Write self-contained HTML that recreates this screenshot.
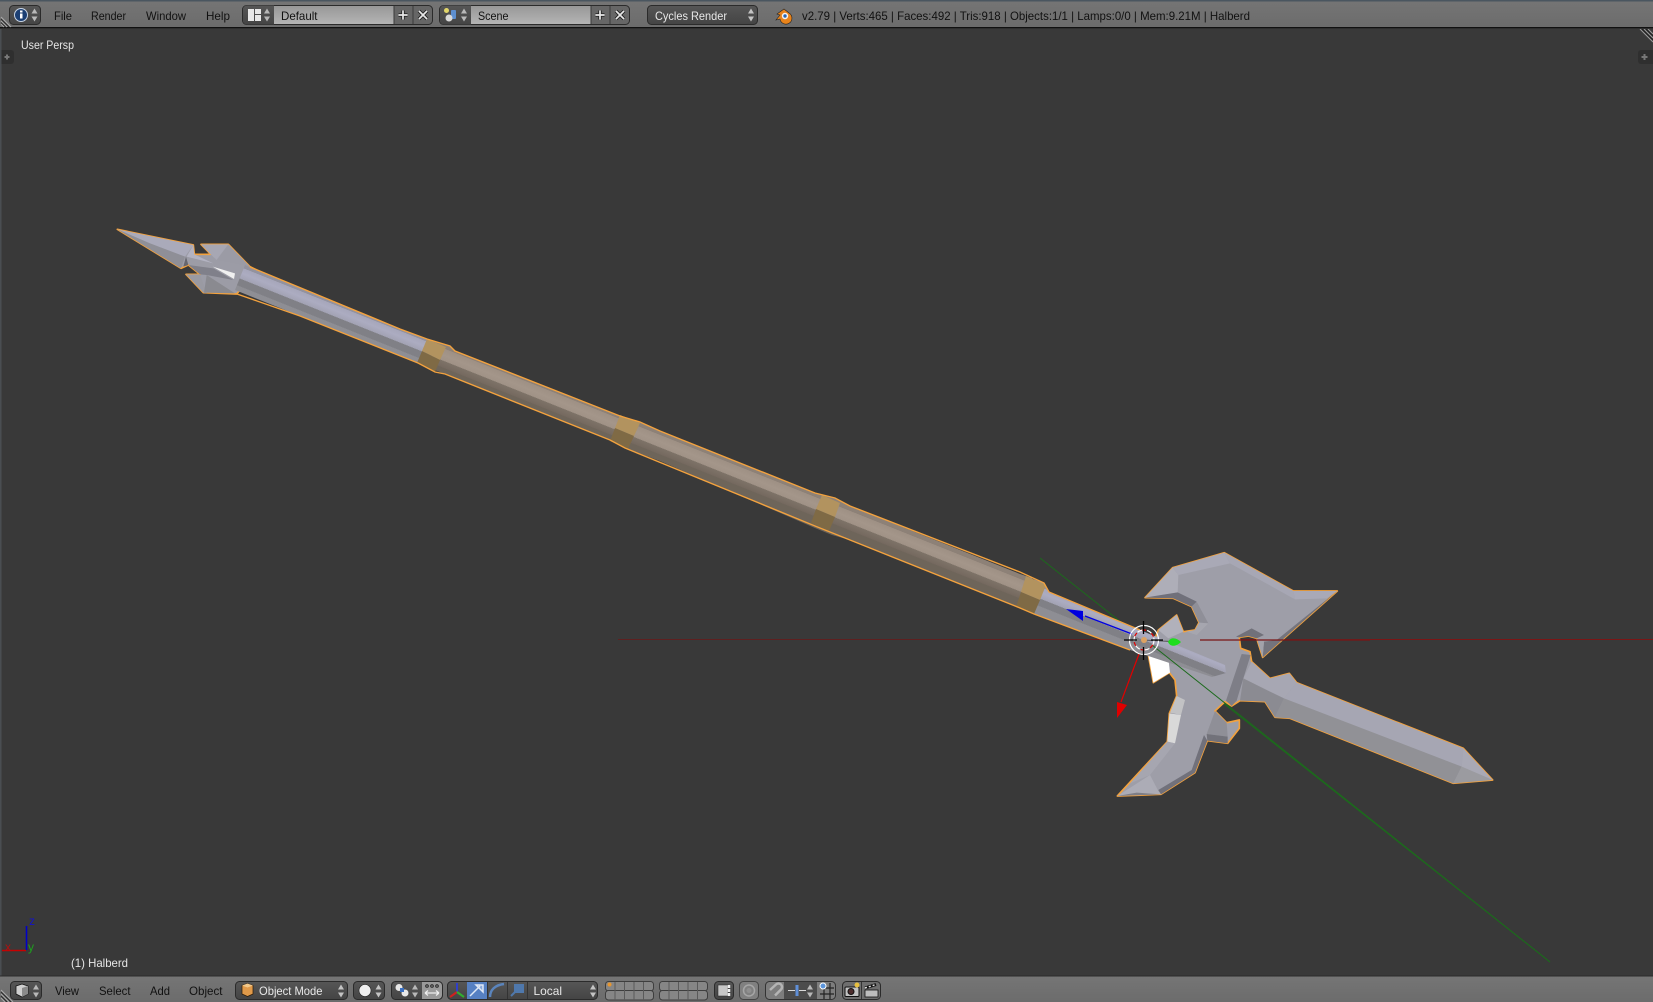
<!DOCTYPE html>
<html><head><meta charset="utf-8"><title>Blender</title>
<style>
html,body{margin:0;padding:0;background:#393939;overflow:hidden}
svg{display:block}
text{font-family:"Liberation Sans",sans-serif;font-size:12px}
</style></head><body>
<svg xmlns="http://www.w3.org/2000/svg" width="1653" height="1002" viewBox="0 0 1653 1002">
<defs>
<linearGradient id="gs" gradientUnits="userSpaceOnUse" x1="804.8" y1="490" x2="795.2" y2="514">
<stop offset="0" stop-color="#92929f"/><stop offset=".1" stop-color="#92929f"/><stop offset=".1" stop-color="#a6a6ba"/><stop offset=".3" stop-color="#acacc1"/><stop offset=".52" stop-color="#a2a2b3"/><stop offset=".52" stop-color="#808086"/><stop offset=".8" stop-color="#808086"/><stop offset=".8" stop-color="#8e8e94"/><stop offset="1" stop-color="#8e8e94"/>
</linearGradient>
<linearGradient id="gt" gradientUnits="userSpaceOnUse" x1="804.8" y1="490" x2="795.2" y2="514">
<stop offset="0" stop-color="#8d8177"/><stop offset=".1" stop-color="#8d8177"/><stop offset=".1" stop-color="#9e9084"/><stop offset=".35" stop-color="#a4968a"/><stop offset=".55" stop-color="#a09286"/><stop offset=".55" stop-color="#7e7368"/><stop offset=".8" stop-color="#75695f"/><stop offset=".8" stop-color="#6e655a"/><stop offset="1" stop-color="#6e655a"/>
</linearGradient>
<linearGradient id="field" x1="0" y1="0" x2="0" y2="1"><stop offset="0" stop-color="#989898"/><stop offset="1" stop-color="#b4b4b4"/></linearGradient>
<linearGradient id="dark" x1="0" y1="0" x2="0" y2="1"><stop offset="0" stop-color="#565656"/><stop offset="1" stop-color="#444"/></linearGradient>
<linearGradient id="bar" x1="0" y1="0" x2="0" y2="1"><stop offset="0" stop-color="#757575"/><stop offset="1" stop-color="#6c6c6c"/></linearGradient>
<symbol id="ud" viewBox="0 0 8 14" width="8" height="14"><path d="M4 0.5L7 5.5H1Z M4 13.5L1 8.5H7Z" fill="#b8b8b8"/></symbol>
<symbol id="udl" viewBox="0 0 8 14" width="8" height="14"><path d="M4 0.5L7 5.5H1Z M4 13.5L1 8.5H7Z" fill="#c4c4c4"/></symbol>
</defs>

<rect width="1653" height="1002" fill="#393939"/>

<!-- axis lines behind object -->
<line x1="618" y1="639.5" x2="1653" y2="639.5" stroke="#5e2020" stroke-width="1"/>
<line x1="1360" y1="639.5" x2="1653" y2="639.5" stroke="#7a1616" stroke-width="1"/>
<line x1="1040" y1="558" x2="1550" y2="962" stroke="#1c6a1c" stroke-width="1"/>

<!-- axe in 3x local coords -->
<g transform="translate(1080,530) scale(.33333)">
<path d="M433 68L640 183L772 183L548 382L530 325L505 318L478 322L482 355L510 365L515 395L570 445L628 430L650 458L1150 655L1238 750L1120 760L630 565L585 562L555 515L480 512L455 528L435 515L405 543L440 578L478 570L478 595L443 640L382 632L345 728L243 793L112 798L262 635L268 550L290 498L285 450L268 428L220 458L205 375L235 300L290 255L310 305L345 300L357 278L335 230L280 205L195 203L278 113Z" fill="#9e9ea8" stroke="#f3a23e" stroke-width="5" stroke-linejoin="round"/>
<path d="M278 113L433 68L450 100L295 135Z" fill="#a9a9b6"/>
<path d="M433 68L640 183L645 208L450 100Z" fill="#a7a7b4"/>
<path d="M640 183L772 183L740 205L645 208Z" fill="#a9a9b7"/>
<path d="M772 183L590 330L552 335L548 382Z" fill="#74747d"/>
<path d="M530 325L552 335L548 382Z" fill="#a2a2aa"/>
<path d="M195 203L278 113L295 135L293 187Z" fill="#aeaeb8"/>
<path d="M195 203L293 187L350 215L335 230L280 205Z" fill="#70707a"/>
<path d="M335 230L350 215L385 280L357 278Z" fill="#8f8f98"/>
<path d="M318 305L345 300L357 278L385 280L350 315Z" fill="#a6a6af"/>
<path d="M468 320L515 295L552 315L530 325L505 318L478 322Z" fill="#71717a"/>
<path d="M235 300L290 255L310 305L265 325Z" fill="#b1b1bb"/>
<path d="M205 375L265 385L270 428L220 458Z" fill="#fff"/>
<path d="M650 458L1150 655L1145 710L612 505Z" fill="#a6a6b3"/>
<path d="M612 505L1145 710L1120 760L630 565L585 562Z" fill="#919196"/>
<path d="M1150 655L1238 750L1145 710Z" fill="#a9a9b5"/>
<path d="M1145 710L1238 750L1120 760Z" fill="#9b9ba0"/>
<path d="M515 395L570 445L628 430L650 458L612 505L560 480L490 445Z" fill="#a7a7b3"/>
<path d="M490 445L560 480L612 505L585 562L555 515L480 512Z" fill="#8b8b92"/>
<path d="M485 372L512 375L490 445L470 512L455 528L438 512Z" fill="#7e7e87"/>
<path d="M290 498L315 510L303 555L270 548Z" fill="#c2c2c4"/>
<path d="M268 550L303 555L285 640L262 635Z" fill="#d9d9d9"/>
<path d="M382 632L345 728L243 793L235 780L335 720L372 615Z" fill="#71717b"/>
<path d="M405 543L440 578L443 620L380 612Z" fill="#8f8f97"/>
<path d="M380 612L443 620L443 640L382 632Z" fill="#72727a"/>
<path d="M112 798L210 735L235 783L243 793Z" fill="#acacb6"/>
<path d="M112 798L243 793L170 788Z" fill="#7e7e86"/>
<path d="M262 635L285 640L210 735L150 760Z" fill="#a6a6b0"/>
</g>

<!-- spear head -->
<g transform="translate(100,210) scale(.33333)">
<path d="M52 58L280 105L283 133L332 133L303 103L385 103L450 170L470 180L410 252L310 248L258 193L300 193L265 165L243 175Z" fill="#9c9ca6" stroke="#f3a23e" stroke-width="5" stroke-linejoin="round"/>
<path d="M52 58L280 105L255 140L150 100Z" fill="#aaaaba"/>
<path d="M52 58L150 100L255 140L243 175Z" fill="#8f8f97"/>
<path d="M280 105L283 133L340 160L260 140Z" fill="#b3b3c2"/>
<path d="M303 103L385 103L350 150L332 133Z" fill="#a7a7b3"/>
<path d="M385 103L450 170L350 150Z" fill="#9b9ba5"/>
<path d="M258 140L265 165L250 170Z" fill="#66666e"/>
<path d="M265 165L340 175L400 210L320 195L300 193Z" fill="#80808a"/>
<path d="M258 193L300 193L320 250L310 248Z" fill="#9a9aa2"/>
<path d="M320 195L405 250L312 248Z" fill="#8a8a90"/>
<path d="M338 170L405 190L402 207Z" fill="#f0f0f0"/>
</g>

<!-- shaft -->
<path d="M245 265L300 288L400 329L432 341L432 369L418 363L300 316L235 290Z" fill="url(#gs)"/>
<path d="M432 341L450 346L455 351L620 416L640 422L660 431L815 493L835 498L850 506L1020 574L1032 578L1032 613L1020 608L850 540L832 535L815 528L660 461L625 448L610 440L445 374L432 369Z" fill="url(#gt)"/>
<path d="M1030 578L1044 583L1049 592L1140 630L1225 665L1226 673L1212 677L1130 650L1034 614L1024 610Z" fill="url(#gs)"/>
<!-- rings -->
<path d="M422 351L427 339L446 347L440 360Z" fill="#b2935f"/>
<path d="M422 351L440 360L435 372L417 363Z" fill="#7f6a45"/>
<path d="M620 415L640 423L634 436L615 428Z" fill="#b2935f"/>
<path d="M615 428L634 436L628 449L610 441Z" fill="#7f6a45"/>
<path d="M822 495L840 503L835 517L816 509Z" fill="#b2935f"/>
<path d="M816 509L835 517L829 531L811 523Z" fill="#7f6a45"/>
<path d="M1026 576L1046 585L1040 600L1021 592Z" fill="#b2935f"/>
<path d="M1021 592L1040 600L1034 614L1016 607Z" fill="#7f6a45"/>
<!-- shaft outline -->
<path d="M250 267L400 329L427 339L450 346L455 351L620 416L640 422L660 431L815 493L835 498L850 506L1020 572L1044 583L1049 592L1140 630" fill="none" stroke="#f3a23e" stroke-width="1.400"/>
<path d="M237 294L300 316L418 363L435 372L445 374L610 440L625 448L815 526L830 532L850 540L1020 608L1034 614L1130 650" fill="none" stroke="#f3a23e" stroke-width="1.400"/>

<!-- green line over axe -->
<line x1="1152" y1="645" x2="1550" y2="962" stroke="#1c6a1c" stroke-width="1"/>
<line x1="1200" y1="640" x2="1370" y2="640" stroke="#7a1616" stroke-width="1.200"/>

<!-- gizmos -->
<line x1="1143" y1="640" x2="1180" y2="642" stroke="#555" stroke-width="1"/>
<path d="M1168 642C1170 637 1176 637 1181 642C1176 647 1170 647 1168 642Z" fill="#1fdd1f"/>
<line x1="1132" y1="634" x2="1085" y2="616" stroke="#0000e0" stroke-width="1.400"/>
<path d="M1066 609L1083 611L1083 621Z" fill="#0000e0"/>
<line x1="1139" y1="654" x2="1121" y2="702" stroke="#e00000" stroke-width="1.200"/>
<path d="M1117 718L1117 702L1127 705Z" fill="#e00000"/>
<circle cx="1144" cy="640" r="14.500" fill="none" stroke="#fff" stroke-width="1.200"/>
<circle cx="1144" cy="640" r="10" fill="none" stroke="#fff" stroke-width="1.200" stroke-dasharray="6 4"/>
<circle cx="1144" cy="640" r="10" fill="none" stroke="#e00000" stroke-width="1.200" stroke-dasharray="4 6" stroke-dashoffset="5"/>
<path d="M1124 640H1137M1151 640H1163M1143.500 621V634M1143.500 647V660" stroke="#000" stroke-width="1.300" fill="none"/>
<circle cx="1144" cy="640" r="3" fill="#dda262"/>

<!-- view text -->
<text x="21" y="49" fill="#e6e6e6" font-size="12" textLength="53" lengthAdjust="spacingAndGlyphs">User Persp</text>
<text x="71" y="967" fill="#e6e6e6" font-size="12" textLength="57" lengthAdjust="spacingAndGlyphs">(1) Halberd</text>

<!-- orientation axes -->
<line x1="2" y1="950.500" x2="26" y2="950.500" stroke="#c80000" stroke-width="1.600"/>
<line x1="26.500" y1="926" x2="26.500" y2="950" stroke="#0000c8" stroke-width="1.600"/>
<text x="5" y="951" fill="#b01010" font-size="11">x</text>
<text x="29" y="925" fill="#1414c8" font-size="11">z</text>
<text x="28" y="951" fill="#1ea01e" font-size="11">y</text>

<!-- area plus tabs -->
<rect x="-4" y="50" width="18" height="14" rx="3" fill="#2f2f2f"/>
<path d="M4.500 57H9.500M7 54.500V59.500" stroke="#777" stroke-width="2"/>
<rect x="1638" y="50" width="20" height="14" rx="3" fill="#2f2f2f"/>
<path d="M1641.500 57H1647.500M1644.500 54V60" stroke="#777" stroke-width="2"/>
<path d="M1640 29L1653 42M1644 29L1653 38M1648 29L1653 34" stroke="#9a9a9a" stroke-width="1" fill="none"/>
<path d="M1642 29L1653 40M1646 29L1653 36" stroke="#1e1e1e" stroke-width="1" fill="none"/>

<rect x="0" y="28" width="1.500" height="948" fill="#4a4e52"/>

<!-- TOP BAR -->
<rect x="0" y="0" width="1653" height="27" fill="url(#bar)"/>
<rect x="0" y="0" width="1653" height="1.500" fill="#4a5660"/>
<rect x="0" y="27" width="1653" height="1" fill="#111"/>
<rect x="0" y="28" width="1653" height="1" fill="#2e2e2e"/>
<path d="M1 17L11 27M1 21L7 27M1 24L4 27" stroke="#aaa" stroke-width="1" fill="none"/>
<path d="M1 19L9 27M1 22.500L5.500 27" stroke="#2a2a2a" stroke-width="1" fill="none"/>

<rect x="9.500" y="5.500" width="31" height="19" rx="4" fill="url(#dark)" stroke="#2b2b2b"/>
<circle cx="21" cy="15" r="6.500" fill="#1c3f73" stroke="#c8d4e4" stroke-width="1"/>
<rect x="20" y="13.500" width="2.500" height="5" fill="#fff"/><rect x="20" y="10.500" width="2.500" height="2" fill="#fff"/>
<use href="#ud" x="30.500" y="8"/>
<text x="54" y="20" fill="#111" font-size="12" textLength="18" lengthAdjust="spacingAndGlyphs">File</text>
<text x="91" y="20" fill="#111" font-size="12" textLength="35" lengthAdjust="spacingAndGlyphs">Render</text>
<text x="146" y="20" fill="#111" font-size="12" textLength="40" lengthAdjust="spacingAndGlyphs">Window</text>
<text x="206" y="20" fill="#111" font-size="12" textLength="24" lengthAdjust="spacingAndGlyphs">Help</text>

<!-- layout -->
<rect x="242.500" y="5.500" width="190" height="19" rx="4" fill="#666" stroke="#2b2b2b"/>
<path d="M243 9.500a4 4 0 0 1 4-4H274V24.500H247a4 4 0 0 1-4-4Z" fill="url(#dark)"/>
<rect x="274" y="6" width="119.500" height="18" fill="url(#field)"/>
<rect x="393.500" y="6" width="1" height="18" fill="#3a3a3a"/>
<rect x="412.500" y="6" width="1" height="18" fill="#3a3a3a"/>
<rect x="248" y="9" width="6" height="12" fill="#e8e8e8"/><rect x="255" y="9" width="6" height="5" fill="#e8e8e8"/><rect x="255" y="15" width="6" height="6" fill="#e8e8e8"/>
<use href="#ud" x="263" y="8"/>
<text x="281" y="20" fill="#111" font-size="12" textLength="36.500" lengthAdjust="spacingAndGlyphs">Default</text>
<path d="M403 10.500V19.500M398.500 15H407.500" stroke="#222" stroke-width="3.500"/><path d="M403 10.500V19.500M398.500 15H407.500" stroke="#e8e8e8" stroke-width="1.700"/>
<path d="M419 11L427 19M427 11L419 19" stroke="#222" stroke-width="3.500"/><path d="M419 11L427 19M427 11L419 19" stroke="#e8e8e8" stroke-width="1.700"/>

<!-- scene -->
<rect x="439.500" y="5.500" width="190" height="19" rx="4" fill="#666" stroke="#2b2b2b"/>
<path d="M440 9.500a4 4 0 0 1 4-4H471V24.500H444a4 4 0 0 1-4-4Z" fill="url(#dark)"/>
<rect x="471" y="6" width="119.500" height="18" fill="url(#field)"/>
<rect x="590.500" y="6" width="1" height="18" fill="#3a3a3a"/>
<rect x="609.500" y="6" width="1" height="18" fill="#3a3a3a"/>
<circle cx="446.500" cy="10.500" r="2.500" fill="#e2d66a"/><rect x="451" y="10" width="5" height="9" rx="1" fill="#5d8fd0"/><circle cx="449" cy="18" r="3.500" fill="#d8d8d8"/>
<use href="#ud" x="460" y="8"/>
<text x="478" y="20" fill="#111" font-size="12" textLength="30.500" lengthAdjust="spacingAndGlyphs">Scene</text>
<path d="M600 10.500V19.500M595.500 15H604.500" stroke="#222" stroke-width="3.500"/><path d="M600 10.500V19.500M595.500 15H604.500" stroke="#e8e8e8" stroke-width="1.700"/>
<path d="M616 11L624 19M624 11L616 19" stroke="#222" stroke-width="3.500"/><path d="M616 11L624 19M624 11L616 19" stroke="#e8e8e8" stroke-width="1.700"/>

<!-- engine -->
<rect x="647.500" y="5.500" width="110" height="19" rx="4" fill="url(#dark)" stroke="#2b2b2b"/>
<text x="655" y="20" fill="#e8e8e8" font-size="12" textLength="72" lengthAdjust="spacingAndGlyphs">Cycles Render</text>
<use href="#udl" x="747" y="8"/>

<!-- logo -->
<path d="M777 14L784 9L789 13A6 6 0 1 1 780 19L776 20L780 15Z" fill="#e8831a" stroke="#222" stroke-width=".6"/>
<circle cx="785" cy="16" r="3.200" fill="#f4f4f4"/><circle cx="785" cy="16" r="1.700" fill="#2c66b0"/>
<text x="802" y="20" fill="#111" font-size="12" textLength="448" lengthAdjust="spacingAndGlyphs">v2.79 | Verts:465 | Faces:492 | Tris:918 | Objects:1/1 | Lamps:0/0 | Mem:9.21M | Halberd</text>

<!-- BOTTOM BAR -->
<rect x="0" y="975.500" width="1653" height="1" fill="#2a2a2a"/>
<rect x="0" y="976.500" width="1653" height="25.500" fill="url(#bar)"/>
<path d="M1 990L13 1002M1 994L9 1002M1 998L5 1002" stroke="#aaa" stroke-width="1" fill="none"/>
<path d="M1 992L11 1002M1 996L7 1002" stroke="#2a2a2a" stroke-width="1" fill="none"/>

<rect x="10.500" y="981.500" width="31" height="18" rx="4" fill="url(#dark)" stroke="#2b2b2b"/>
<path d="M16 986L22 984L28 986V994L22 997L16 994Z" fill="#cfcfcf" stroke="#111" stroke-width=".8"/><path d="M22 988L28 986V994L22 997Z" fill="#8a8a8a"/>
<use href="#ud" x="32" y="984"/>
<text x="55" y="995" fill="#111" font-size="12" textLength="24" lengthAdjust="spacingAndGlyphs">View</text>
<text x="99" y="995" fill="#111" font-size="12" textLength="31.500" lengthAdjust="spacingAndGlyphs">Select</text>
<text x="150" y="995" fill="#111" font-size="12" textLength="20" lengthAdjust="spacingAndGlyphs">Add</text>
<text x="189" y="995" fill="#111" font-size="12" textLength="33.500" lengthAdjust="spacingAndGlyphs">Object</text>

<rect x="235.500" y="981.500" width="112" height="18" rx="4" fill="url(#dark)" stroke="#2b2b2b"/>
<path d="M242 985.500L247.500 983.500L253 985.500V994L247.500 996.500L242 994Z" fill="#e09a4a" stroke="#2a1a08" stroke-width=".7"/><path d="M242 985.500L247.500 987.500L253 985.500L247.500 983.500Z" fill="#f2c88a"/>
<text x="259" y="995" fill="#e8e8e8" font-size="12" textLength="63.500" lengthAdjust="spacingAndGlyphs">Object Mode</text>
<use href="#udl" x="337" y="984"/>

<rect x="353.500" y="981.500" width="31" height="18" rx="4" fill="url(#dark)" stroke="#2b2b2b"/>
<circle cx="365" cy="990.500" r="6" fill="#f0f0f0" stroke="#222" stroke-width=".6"/>
<use href="#udl" x="374.500" y="984"/>

<rect x="391.500" y="981.500" width="51" height="18" rx="4" fill="url(#dark)" stroke="#2b2b2b"/>
<path d="M422 982H438a4 4 0 0 1 4 4V995a4 4 0 0 1-4 4H422Z" fill="#9a9a9a"/>
<circle cx="399" cy="987.500" r="3.500" fill="#e8e8e8"/><circle cx="405" cy="993" r="3.500" fill="#e8e8e8"/><rect x="400" y="988" width="4" height="4" fill="#3a6fc0"/>
<use href="#ud" x="411" y="984"/>
<circle cx="427" cy="986" r="1.300" fill="none" stroke="#222"/><circle cx="432" cy="986" r="1.300" fill="none" stroke="#222"/><circle cx="437" cy="986" r="1.300" fill="none" stroke="#222"/>
<path d="M425 993H439M425 993L428 990.500M425 993L428 995.500M439 993L436 990.500M439 993L436 995.500" stroke="#eee" stroke-width="1.200" fill="none"/>

<!-- manipulators -->
<rect x="447.500" y="981.500" width="150" height="18" rx="4" fill="url(#dark)" stroke="#2b2b2b"/>
<rect x="467" y="982" width="20" height="17" fill="#5680c2"/>
<rect x="487" y="982" width="1" height="17" fill="#333"/><rect x="507" y="982" width="1" height="17" fill="#333"/><rect x="527" y="982" width="1" height="17" fill="#333"/>
<path d="M457 992V983" stroke="#3040c8" stroke-width="2"/><path d="M457 992L450 997" stroke="#d02020" stroke-width="2"/><path d="M457 992L464 997" stroke="#30b030" stroke-width="2"/>
<path d="M470 996L480 986M476 985H483V992Z" stroke="#dfe8f5" stroke-width="1.500" fill="#88a8dc"/>
<path d="M490 997C490 990 495 985 504 984" stroke="#5a84bc" stroke-width="2.500" fill="none"/>
<path d="M511 996L518 989M515 985H523V992H515Z" stroke="#4f78ac" stroke-width="2" fill="#4f78ac"/>
<text x="533.500" y="995" fill="#e8e8e8" font-size="12" textLength="28.500" lengthAdjust="spacingAndGlyphs">Local</text>
<use href="#udl" x="589" y="984"/>

<!-- layers -->
<g fill="#868686" stroke="#3e3e3e" stroke-width="1">
<rect x="605.500" y="981.500" width="48" height="9.500" rx="3"/><rect x="605.500" y="990.500" width="48" height="9.500" rx="3"/>
<rect x="659.500" y="981.500" width="48" height="9.500" rx="3"/><rect x="659.500" y="990.500" width="48" height="9.500" rx="3"/>
</g>
<path d="M615 982V1000M624.500 982V1000M634 982V1000M643.500 982V1000M669 982V1000M678.500 982V1000M688 982V1000M697.500 982V1000" stroke="#5a5a5a" stroke-width="1"/>
<circle cx="609.500" cy="984.500" r="2" fill="#e8962e"/>

<!-- lock -->
<rect x="714.500" y="981.500" width="19" height="18" rx="4" fill="url(#dark)" stroke="#2b2b2b"/>
<rect x="718" y="985" width="10" height="11" fill="#c6c6c6" stroke="#222" stroke-width=".5"/>
<path d="M729 985V996" stroke="#eee" stroke-width="2.500" stroke-dasharray="3 1"/>
<!-- proportional -->
<rect x="739.500" y="981.500" width="19" height="18" rx="4" fill="#808080" stroke="#444"/>
<circle cx="749" cy="990.500" r="5.500" fill="none" stroke="#a6a6a6" stroke-width="1.500"/><circle cx="749" cy="990.500" r="2.500" fill="#909090"/>
<!-- snap -->
<rect x="765.500" y="981.500" width="70" height="18" rx="4" fill="#7d7d7d" stroke="#333"/>
<rect x="784" y="982" width="33" height="17" fill="#4c4c4c"/>
<path d="M770 990L776 984.500A3.500 3.500 0 0 1 781 989.500L775 995.500" stroke="#b4b4b4" stroke-width="2.500" fill="none"/>
<path d="M788 990.500H795M799 990.500H806M797 986V995" stroke="#d8d8d8" stroke-width="1"/><rect x="795.500" y="985" width="3" height="11" fill="#5f8fd8"/>
<use href="#ud" x="806" y="984"/>
<path d="M820 988H834M820 994H834M824 983V999M830 983V999" stroke="#222" stroke-width="1.200"/>
<circle cx="823" cy="986" r="3" fill="#5b95dc" stroke="#fff"/>
<!-- render -->
<rect x="842.500" y="981.500" width="38" height="18" rx="4" fill="#6e6e6e" stroke="#2b2b2b"/>
<rect x="861" y="982" width="1" height="17" fill="#333"/>
<rect x="845" y="987" width="14" height="9.500" rx="1" fill="#c2c2c2" stroke="#111"/><circle cx="851" cy="991.500" r="3" fill="#4d2d2d" stroke="#111"/><circle cx="857" cy="985" r="2.500" fill="#e8c040"/>
<rect x="865" y="990" width="13" height="7" fill="#bdbdbd" stroke="#111" stroke-width=".8"/>
<path d="M865 988L876 984.500" stroke="#111" stroke-width="3"/><path d="M865 988L876 984.500" stroke="#ddd" stroke-width="1.500" stroke-dasharray="2 2"/>
</svg>
</body></html>
